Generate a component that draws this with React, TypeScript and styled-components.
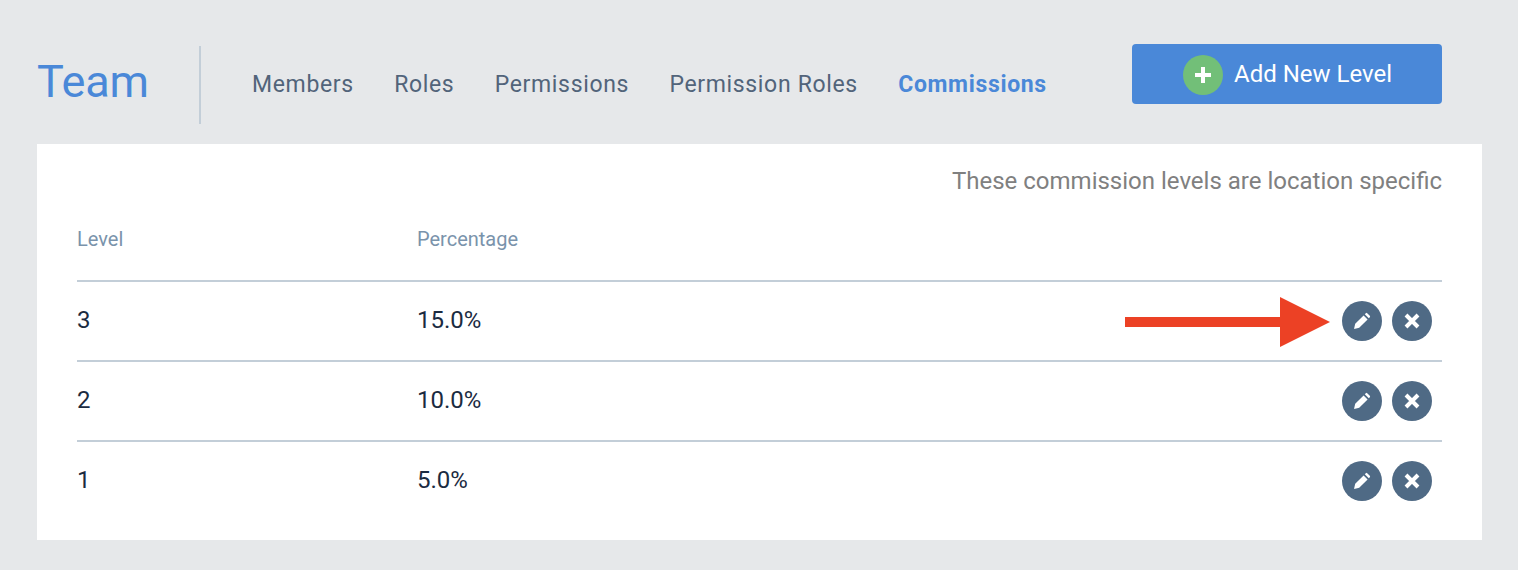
import React from "react";
import styled, { createGlobalStyle } from "styled-components";

const Global = createGlobalStyle`
  html, body { margin: 0; padding: 0; background: #e6e8ea; }
  body { font-family: Roboto, "Liberation Sans", sans-serif; }
`;

const Page = styled.div`
  width: 1518px;
  height: 570px;
  box-sizing: border-box;
  padding: 44px 36px 30px 37px;
  display: flex;
  flex-direction: column;
  overflow: hidden;
`;

const Header = styled.header`
  display: flex;
  align-items: flex-start;
  height: 100px;
  padding-right: 40px;
`;

const Title = styled.h1`
  margin: 2px 0 0;
  width: 164px;
  height: 78px;
  box-sizing: border-box;
  border-right: 2px solid #c3ced8;
  font-size: 45px;
  line-height: 72px;
  font-weight: 400;
  letter-spacing: -0.2px;
  color: #4a88d8;
`;

const Nav = styled.nav`
  display: flex;
  gap: 40.3px;
  margin-left: 51px;
  flex: 1;
  height: 80px;
  align-items: center;
`;

const NavLink = styled.a<{ $active?: boolean }>`
  font-size: 23px;
  letter-spacing: 0.66px;
  line-height: 80px;
  padding-top: 2px;
  color: ${(p) => (p.$active ? "#4a88d8" : "#52647a")};
  font-weight: ${(p) => (p.$active ? 700 : 400)};
`;

const AddButton = styled.button`
  width: 310px;
  height: 60px;
  border: none;
  border-radius: 4px;
  background: #4a88d8;
  color: #fff;
  font-family: inherit;
  font-size: 24px;
  font-weight: 400;
  display: flex;
  align-items: center;
  justify-content: center;
  gap: 11px;
  padding: 0 0 0 1px;
`;

const PlusBadge = styled.span`
  width: 40px;
  height: 40px;
  margin-top: 2px;
  border-radius: 50%;
  background: #72bf78;
  display: flex;
  align-items: center;
  justify-content: center;
`;

const Card = styled.section`
  background: #fff;
  width: 1445px;
  height: 396px;
  box-sizing: border-box;
  padding: 20px 40px 0;
`;

const Hint = styled.div`
  text-align: right;
  font-size: 24px;
  line-height: 34px;
  color: #808080;
`;

const HeadRow = styled.div`
  display: grid;
  grid-template-columns: 340px 1fr;
  height: 84px;
  box-sizing: border-box;
  padding-top: 29px;
  border-bottom: 2px solid #c3ced8;
  font-size: 20px;
  line-height: 24px;
  color: #7a93ab;
`;

const Row = styled.div<{ $last?: boolean }>`
  position: relative;
  display: grid;
  grid-template-columns: 340px 1fr auto;
  align-items: center;
  height: 80px;
  box-sizing: border-box;
  padding-right: 10px;
  border-bottom: 2px solid ${(p) => (p.$last ? "transparent" : "#c3ced8")};
  font-size: 24px;
  color: #1b2b41;
`;

const RowText = styled.span`
  margin-bottom: 2px;
`;

const Actions = styled.div`
  display: flex;
  gap: 10px;
`;

const IconButton = styled.button`
  width: 40px;
  height: 40px;
  border: none;
  border-radius: 50%;
  padding: 0;
  background: #4f6a85;
  display: flex;
  align-items: center;
  justify-content: center;
`;

const Arrow = styled.svg`
  position: absolute;
  left: 1048px;
  top: 15px;
`;

const Pencil = () => (
  <svg width="18" height="18" viewBox="0 0 18 18">
    <path fill="#fff" d="M1 17l1.2-5.2L10.6 3.4l4 4-8.4 8.4L1 17zM11.8 2.2l1-1a1 1 0 0 1 1.4 0l2.6 2.6a1 1 0 0 1 0 1.4l-1 1-4-4z" />
  </svg>
);

const Cross = () => (
  <svg width="16" height="16" viewBox="0 0 16 16">
    <path stroke="#fff" strokeWidth="4" strokeLinecap="butt" d="M2 2l12 12M14 2L2 14" />
  </svg>
);

const levels = [
  { level: "3", pct: "15.0%" },
  { level: "2", pct: "10.0%" },
  { level: "1", pct: "5.0%" },
];

export default function App() {
  return (
    <>
      <Global />
      <Page>
        <Header>
          <Title>Team</Title>
          <Nav>
            <NavLink>Members</NavLink>
            <NavLink>Roles</NavLink>
            <NavLink>Permissions</NavLink>
            <NavLink>Permission Roles</NavLink>
            <NavLink $active>Commissions</NavLink>
          </Nav>
          <AddButton>
            <PlusBadge>
              <svg width="18" height="18" viewBox="0 0 18 18">
                <path stroke="#fff" strokeWidth="4" d="M9 1v16M1 9h16" />
              </svg>
            </PlusBadge>
            Add New Level
          </AddButton>
        </Header>
        <Card>
          <Hint>These commission levels are location specific</Hint>
          <HeadRow>
            <span>Level</span>
            <span>Percentage</span>
          </HeadRow>
          {levels.map((l, i) => (
            <Row key={l.level} $last={i === levels.length - 1}>
              <RowText>{l.level}</RowText>
              <RowText>{l.pct}</RowText>
              <Actions>
                <IconButton><Pencil /></IconButton>
                <IconButton><Cross /></IconButton>
              </Actions>
              {i === 0 && (
                <Arrow width="205" height="50" viewBox="0 0 205 50">
                  <path fill="#ec4125" d="M0 20h155V0l50 25-50 25V30H0z" />
                </Arrow>
              )}
            </Row>
          ))}
        </Card>
      </Page>
    </>
  );
}
